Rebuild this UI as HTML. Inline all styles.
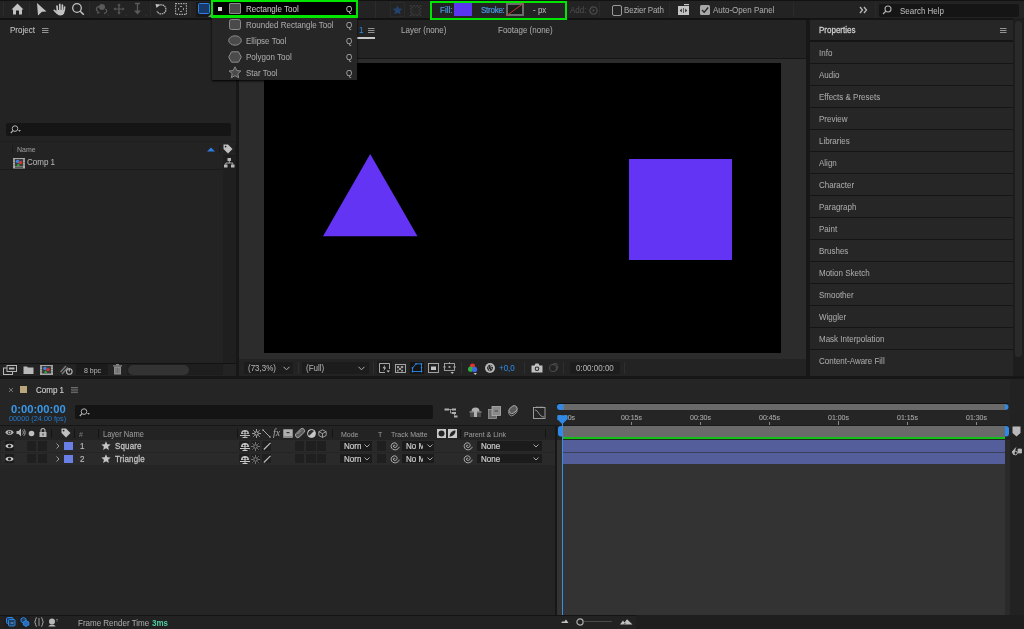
<!DOCTYPE html>
<html><head><meta charset="utf-8">
<style>
*{box-sizing:border-box;margin:0;padding:0}
html,body{width:1024px;height:629px;overflow:hidden;background:#121212;font-family:"Liberation Sans",sans-serif;color:#a8a8a8;font-size:8px}
body{position:relative}
.t{will-change:transform}
.a{position:absolute}
.t{position:absolute;white-space:nowrap;line-height:1}
svg{position:absolute;overflow:visible}
</style></head><body>
<div class="a" style="left:0px;top:1px;width:1024px;height:17px;background:#232323;"></div>
<div class="a" style="left:3px;top:2px;width:1px;height:14px;background:#2c2c2c;"></div>
<div class="a" style="left:29px;top:2px;width:1px;height:15px;background:#2a2a2a;"></div>
<div class="a" style="left:89px;top:2px;width:1px;height:15px;background:#2a2a2a;"></div>
<div class="a" style="left:150px;top:2px;width:1px;height:15px;background:#2a2a2a;"></div>
<div class="a" style="left:190px;top:2px;width:1px;height:15px;background:#2a2a2a;"></div>
<svg style="left:11px;top:3px;" width="13" height="12" viewBox="0 0 13 12"><path d="M6.5 0.5 L12.5 6.5 L11 6.5 L11 11.5 L8 11.5 L8 7.5 L5 7.5 L5 11.5 L2 11.5 L2 6.5 L0.5 6.5 Z" fill="#c2c2c2"/></svg>
<svg style="left:37px;top:3px;" width="10" height="13" viewBox="0 0 10 13"><path d="M0 0 L9.5 8.5 L5 8.8 L1 12.5 Z" fill="#c2c2c2"/></svg>
<svg style="left:53px;top:3px;" width="13" height="13" viewBox="0 0 13 13"><path d="M3.6 7 L11.4 7 L11.2 10.5 Q10 12.6 7.2 12.6 Q5 12.6 3.6 10.6 Z" fill="#c2c2c2"/><path d="M4.4 8 L4 3 M6.8 7.5 L6.8 1.4 M9.2 7.5 L9.4 2 M11.1 8 L11.6 4.2 M4.2 10.2 L1.3 7.4" stroke="#c2c2c2" stroke-width="1.7" stroke-linecap="round" fill="none"/></svg>
<svg style="left:71px;top:2px;" width="14" height="14" viewBox="0 0 14 14"><circle cx="6" cy="6" r="4.3" fill="none" stroke="#c2c2c2" stroke-width="1.3"/><path d="M9.2 9.2 L12.8 12.8" stroke="#c2c2c2" stroke-width="1.6"/></svg>
<svg style="left:95px;top:3px;" width="14" height="13" viewBox="0 0 14 13"><circle cx="7" cy="4" r="3" fill="#5a5a5a"/><path d="M4 3.5 C1 4 0.5 7 3 8.5 M9 10.5 C12 10 12.5 7.5 10.5 6" fill="none" stroke="#5a5a5a" stroke-width="1.3"/><path d="M2 8 L5 9.5 L2.5 11 Z" fill="#5a5a5a"/><path d="M12.5 12.5 L13.5 12.5 L13.5 11.5 Z" fill="#5a5a5a"/></svg>
<svg style="left:113px;top:3px;" width="14" height="13" viewBox="0 0 14 13"><path d="M6 0.5 L7.8 2.5 H6.6 V5.4 H9.5 V4.2 L11.5 6 L9.5 7.8 V6.6 H6.6 V9.5 H7.8 L6 11.5 L4.2 9.5 H5.4 V6.6 H2.5 V7.8 L0.5 6 L2.5 4.2 V5.4 H5.4 V2.5 H4.2 Z" fill="#5a5a5a"/><path d="M12.5 12.5 L13.5 12.5 L13.5 11.5 Z" fill="#5a5a5a"/></svg>
<svg style="left:133px;top:3px;" width="14" height="13" viewBox="0 0 14 13"><path d="M2 0.5 H7 M4.5 0.5 V8" stroke="#5a5a5a" stroke-width="1.3"/><path d="M1 7.5 H8 L4.5 11.5 Z" fill="#5a5a5a"/><path d="M12.5 12.5 L13.5 12.5 L13.5 11.5 Z" fill="#5a5a5a"/></svg>
<svg style="left:155px;top:3px;" width="13" height="13" viewBox="0 0 13 13"><path d="M3.2 3 A4.6 4.6 0 1 1 2 8" fill="none" stroke="#b8b8b8" stroke-width="1.2" stroke-dasharray="1.6 0.6"/><path d="M0.5 1 L5 1.5 L1.5 5 Z" fill="#c2c2c2"/></svg>
<svg style="left:175px;top:3px;" width="12" height="12" viewBox="0 0 12 12"><rect x="0.6" y="0.6" width="10.8" height="10.8" fill="none" stroke="#b0b0b0" stroke-width="1.1" stroke-dasharray="1.5 1"/><path d="M3 4.5 L4.2 6 L3 7.5 Z M9 4.5 L7.8 6 L9 7.5 Z M4.5 3 L6 4.2 L7.5 3 Z M4.5 9 L6 7.8 L7.5 9 Z" fill="#b0b0b0"/></svg>
<div class="a" style="left:196px;top:2px;width:15px;height:14.5px;background:#181818;"></div>
<div class="a" style="left:197.5px;top:3.4px;width:12.3px;height:10.6px;background:#173a6a;border:1.1px solid #2f7fe4;border-radius:1.5px"></div>
<svg style="left:208px;top:14px;" width="3" height="3" viewBox="0 0 3 3"><path d="M3 0 L3 3 L0 3 Z" fill="#888"/></svg>
<div class="a" style="left:375px;top:1px;width:1px;height:17px;background:#2c2c2c;"></div>
<div class="a" style="left:390px;top:2px;width:15px;height:15px;background:#232323;border:1px solid #2a2a2a"></div>
<svg style="left:392px;top:5px;" width="11" height="10" viewBox="0 0 11 10"><path d="M5.5 0.3 L6.9 3.6 L10.6 3.8 L7.8 6.1 L8.7 9.6 L5.5 7.7 L2.3 9.6 L3.2 6.1 L0.4 3.8 L4.1 3.6 Z" fill="#23436e"/></svg>
<svg style="left:410px;top:4.5px;" width="11.2" height="11.2" viewBox="0 0 11.2 11.2"><g fill="#3c3c3c"><rect x="0.0" y="0.0" width="1.6" height="1.6"/><rect x="0.0" y="3.2" width="1.6" height="1.6"/><rect x="0.0" y="6.4" width="1.6" height="1.6"/><rect x="0.0" y="9.6" width="1.6" height="1.6"/><rect x="1.6" y="1.6" width="1.6" height="1.6"/><rect x="1.6" y="4.8" width="1.6" height="1.6"/><rect x="1.6" y="8.0" width="1.6" height="1.6"/><rect x="3.2" y="0.0" width="1.6" height="1.6"/><rect x="3.2" y="3.2" width="1.6" height="1.6"/><rect x="3.2" y="6.4" width="1.6" height="1.6"/><rect x="3.2" y="9.6" width="1.6" height="1.6"/><rect x="4.8" y="1.6" width="1.6" height="1.6"/><rect x="4.8" y="4.8" width="1.6" height="1.6"/><rect x="4.8" y="8.0" width="1.6" height="1.6"/><rect x="6.4" y="0.0" width="1.6" height="1.6"/><rect x="6.4" y="3.2" width="1.6" height="1.6"/><rect x="6.4" y="6.4" width="1.6" height="1.6"/><rect x="6.4" y="9.6" width="1.6" height="1.6"/><rect x="8.0" y="1.6" width="1.6" height="1.6"/><rect x="8.0" y="4.8" width="1.6" height="1.6"/><rect x="8.0" y="8.0" width="1.6" height="1.6"/><rect x="9.6" y="0.0" width="1.6" height="1.6"/><rect x="9.6" y="3.2" width="1.6" height="1.6"/><rect x="9.6" y="6.4" width="1.6" height="1.6"/><rect x="9.6" y="9.6" width="1.6" height="1.6"/></g><circle cx="5.6" cy="5.6" r="3" fill="#262626"/></svg>
<div class="a" style="left:430px;top:1px;width:137px;height:19px;background:#00e600;"></div>
<div class="a" style="left:432px;top:3px;width:133px;height:15px;background:#232323;"></div>
<div class="t" style="left:440px;top:7.23px;font-size:8px;color:#4a98e4;transform:scaleY(1.12);transform-origin:0 6.77px;-webkit-text-stroke:0.2px #4a98e4;">Fill:</div>
<div class="a" style="left:454px;top:3px;width:18px;height:13px;background:#5a36f0;"></div>
<div class="t" style="left:481px;top:7.23px;font-size:8px;color:#4a98e4;transform:scaleY(1.12);transform-origin:0 6.77px;-webkit-text-stroke:0.2px #4a98e4;letter-spacing:-0.25px">Stroke:</div>
<div class="a" style="left:506px;top:3px;width:18px;height:13px;background:#6a6a6a;"></div>
<div class="a" style="left:508px;top:5px;width:14px;height:9px;background:#1a1a1a;"></div>
<svg style="left:506px;top:3px;" width="18" height="13" viewBox="0 0 18 13"><path d="M0 13 L18 0" stroke="#c0392b" stroke-width="1"/></svg>
<div class="t" style="left:533px;top:7.23px;font-size:8px;color:#b8b8b8;transform:scaleY(1.12);transform-origin:0 6.77px;-webkit-text-stroke:0.05px #b8b8b8;"><span style="color:#4a98e4">-</span> px</div>
<div class="t" style="left:570px;top:7.23px;font-size:8px;color:#4e4e4e;transform:scaleY(1.12);transform-origin:0 6.77px;-webkit-text-stroke:0.05px #4e4e4e;">Add:</div>
<svg style="left:589px;top:5.5px;" width="9" height="9" viewBox="0 0 9 9"><circle cx="4.5" cy="4.5" r="3.6" fill="none" stroke="#4a4a4a" stroke-width="1.3"/><path d="M3.6 2.8 L6 4.5 L3.6 6.2 Z" fill="#4a4a4a"/></svg>
<div class="a" style="left:599px;top:2px;width:1px;height:15px;background:#2a2a2a;"></div>
<div class="a" style="left:612px;top:5px;width:9.5px;height:10.5px;background:#232323;border:1.2px solid #9a9a9a;border-radius:2px"></div>
<div class="t" style="left:624px;top:6.73px;font-size:8px;color:#a8a8a8;transform:scaleY(1.12);transform-origin:0 6.77px;-webkit-text-stroke:0.05px #a8a8a8;letter-spacing:-0.15px">Bezier Path</div>
<div class="a" style="left:669px;top:2px;width:1px;height:15px;background:#2a2a2a;"></div>
<svg style="left:678px;top:4px;" width="12" height="12" viewBox="0 0 12 12"><rect x="0" y="2" width="11" height="9" fill="#c4c4c4"/><rect x="6" y="0" width="5" height="1.2" fill="#c4c4c4"/><path d="M3.8 4.5 L1.8 6.5 L3.8 8.5 Z M7.2 4.5 L9.2 6.5 L7.2 8.5 Z" fill="#2a2a2a"/><path d="M5.5 4 V9" stroke="#2a2a2a" stroke-width="0.7"/></svg>
<div class="a" style="left:700px;top:5px;width:10px;height:10px;background:#a8a8a8;border-radius:1.5px"></div>
<svg style="left:700px;top:5px;" width="10" height="10" viewBox="0 0 10 10"><path d="M2 5 L4.2 7.3 L8.2 2.5" fill="none" stroke="#2a2a2a" stroke-width="1.4"/></svg>
<div class="t" style="left:713px;top:6.73px;font-size:8px;color:#a8a8a8;transform:scaleY(1.12);transform-origin:0 6.77px;-webkit-text-stroke:0.05px #a8a8a8;">Auto-Open Panel</div>
<div class="a" style="left:793px;top:2px;width:1px;height:15px;background:#2a2a2a;"></div>
<svg style="left:859px;top:6px;" width="10" height="8" viewBox="0 0 10 8"><path d="M1 1 L3.5 4 L1 7 M5 1 L7.5 4 L5 7" fill="none" stroke="#b8b8b8" stroke-width="1.3"/></svg>
<div class="a" style="left:875px;top:2px;width:1px;height:15px;background:#2a2a2a;"></div>
<div class="a" style="left:879px;top:4px;width:140px;height:13px;background:#151515;border-radius:2px"></div>
<svg style="left:882px;top:5px;" width="10" height="10" viewBox="0 0 10 10"><circle cx="6" cy="4" r="3" fill="none" stroke="#b0b0b0" stroke-width="1.1"/><path d="M3.9 6.1 L1 9" stroke="#b0b0b0" stroke-width="1.3"/></svg>
<div class="t" style="left:900px;top:8.03px;font-size:8px;color:#b8b8b8;transform:scaleY(1.12);transform-origin:0 6.77px;-webkit-text-stroke:0.05px #b8b8b8;">Search Help</div>
<div class="a" style="left:0px;top:20px;width:236px;height:356px;background:#232323;"></div>
<div class="t" style="left:10px;top:27.23px;font-size:8px;color:#c4c4c4;transform:scaleY(1.12);transform-origin:0 6.77px;-webkit-text-stroke:0.05px #c4c4c4;">Project</div>
<svg style="left:42px;top:28px;" width="7" height="6" viewBox="0 0 7 6"><path d="M0 0.5 H6.5 M0 2.5 H6.5 M0 4.5 H6.5" stroke="#b0b0b0" stroke-width="0.8"/></svg>
<div class="a" style="left:6px;top:123px;width:225px;height:13px;background:#151515;border-radius:2px"></div>
<svg style="left:10px;top:125px;" width="12" height="9" viewBox="0 0 12 9"><circle cx="5" cy="3.6" r="2.8" fill="none" stroke="#b0b0b0" stroke-width="1"/><path d="M3 5.6 L0.8 8" stroke="#b0b0b0" stroke-width="1.2"/><path d="M8 5 L11 5 L9.5 6.8 Z" fill="#b0b0b0"/></svg>
<div class="a" style="left:223px;top:155.5px;width:13px;height:207.5px;background:#1f1f1f;"></div>
<div class="a" style="left:0px;top:141px;width:236px;height:1px;background:#1e1e1e;"></div>
<div class="a" style="left:0px;top:154.5px;width:236px;height:1px;background:#1b1b1b;"></div>
<div class="a" style="left:12px;top:145px;width:1px;height:8px;background:#1a1a1a;"></div>
<div class="t" style="left:17px;top:146.07px;font-size:7px;color:#9a9a9a;transform:scaleY(1.12);transform-origin:0 5.93px;-webkit-text-stroke:0.05px #9a9a9a;">Name</div>
<svg style="left:207px;top:147px;" width="8" height="5" viewBox="0 0 8 5"><path d="M0 4.5 L4 0.5 L8 4.5 Z" fill="#2e7de0"/></svg>
<div class="a" style="left:219px;top:145px;width:1px;height:8px;background:#1a1a1a;"></div>
<div class="a" style="left:234.5px;top:145px;width:1px;height:8px;background:#1a1a1a;"></div>
<svg style="left:223px;top:144px;" width="10" height="10" viewBox="0 0 10 10"><path d="M0.5 0.5 H5 L9.5 5 L5 9.5 L0.5 5 Z" fill="#c0c0c0"/><circle cx="2.6" cy="2.6" r="0.9" fill="#232323"/></svg>
<div class="a" style="left:0px;top:155px;width:223px;height:14px;background:#232323;"></div>
<div class="a" style="left:0px;top:169px;width:223px;height:1px;background:#1b1b1b;"></div>
<svg style="left:13px;top:158px;" width="12" height="10.5" viewBox="0 0 12 10.5"><rect x="0" y="0" width="12" height="10.5" fill="#a8a8a8"/><rect x="2" y="1" width="8" height="7.5" fill="#3c3c3c"/><path d="M0.5 1.5h1v1h-1zM0.5 4h1v1h-1zM0.5 6.5h1v1h-1zM10.5 1.5h1v1h-1zM10.5 4h1v1h-1zM10.5 6.5h1v1h-1z" fill="#555"/><path d="M2 9.5 H10" stroke="#333" stroke-width="0.7"/><circle cx="4.6" cy="3.4" r="1.7" fill="#3a86e8"/><circle cx="7.6" cy="4.6" r="1.7" fill="#e03030"/><path d="M3.6 8 L5.3 5.3 L7 8 Z" fill="#22b030"/></svg>
<div class="t" style="left:27px;top:159.23px;font-size:8px;color:#b4b4b4;transform:scaleY(1.12);transform-origin:0 6.77px;-webkit-text-stroke:0.05px #b4b4b4;">Comp 1</div>
<svg style="left:224px;top:158px;" width="11" height="10" viewBox="0 0 11 10"><rect x="3.5" y="0" width="3.5" height="3" fill="#b8b8b8"/><path d="M5.25 3 V5 M1.8 5 H8.7 M1.8 5 V6.5 M8.7 5 V6.5" stroke="#b8b8b8" stroke-width="0.9"/><rect x="0" y="6.5" width="3.5" height="3" fill="#b8b8b8"/><rect x="7" y="6.5" width="3.5" height="3" fill="#b8b8b8"/></svg>
<div class="a" style="left:0px;top:363px;width:236px;height:1px;background:#121212;"></div>
<div class="a" style="left:0px;top:364px;width:236px;height:11px;background:#232323;"></div>
<svg style="left:3px;top:365px;" width="14" height="10" viewBox="0 0 14 10"><rect x="0.5" y="3" width="9" height="6.5" fill="none" stroke="#b8b8b8"/><rect x="4" y="0.5" width="9.5" height="6" fill="#232323" stroke="#b8b8b8"/><rect x="6" y="2.5" width="5.5" height="2" fill="#b8b8b8"/></svg>
<svg style="left:23px;top:365px;" width="11" height="10" viewBox="0 0 11 10"><path d="M0.5 1.5 H4 L5 2.5 H10.5 V9 H0.5 Z" fill="#b8b8b8"/></svg>
<svg style="left:40px;top:365px;" width="13" height="10" viewBox="0 0 13 10"><rect x="0" y="0" width="13" height="10" fill="#a8a8a8"/><rect x="2" y="1" width="9" height="7.5" fill="#3c3c3c"/><path d="M0.5 1.5h1v1h-1zM0.5 4h1v1h-1zM0.5 6.5h1v1h-1zM11.5 1.5h1v1h-1zM11.5 4h1v1h-1zM11.5 6.5h1v1h-1z" fill="#555"/><circle cx="5" cy="3.4" r="1.7" fill="#3a86e8"/><circle cx="8" cy="4.6" r="1.7" fill="#e03030"/><path d="M4 8 L5.7 5.3 L7.4 8 Z" fill="#22b030"/></svg>
<svg style="left:60px;top:365px;" width="13" height="10" viewBox="0 0 13 10"><path d="M0.5 7 L6 1 M2 9 L8 2.5" stroke="#777" stroke-width="1.5"/><circle cx="9.3" cy="6.5" r="2.8" fill="none" stroke="#b8b8b8" stroke-width="1.1"/><path d="M9.3 3 V6.5" stroke="#b8b8b8" stroke-width="1.1"/></svg>
<div class="a" style="left:76px;top:364px;width:32px;height:11px;background:#1b1b1b;border-radius:1px"></div>
<div class="t" style="left:83.5px;top:366.57px;font-size:7px;color:#b0b0b0;transform:scaleY(1.12);transform-origin:0 5.93px;-webkit-text-stroke:0.05px #b0b0b0;">8 bpc</div>
<svg style="left:113px;top:364px;" width="9" height="11" viewBox="0 0 9 11"><rect x="1" y="2.5" width="7" height="8" fill="#8a8a8a"/><rect x="0" y="1.3" width="9" height="1.2" fill="#8a8a8a"/><rect x="3" y="0" width="3" height="1.3" fill="#8a8a8a"/><path d="M3 4 V9 M4.5 4 V9 M6 4 V9" stroke="#555" stroke-width="0.6"/></svg>
<div class="a" style="left:127px;top:364px;width:96px;height:11px;background:#1e1e1e;"></div>
<div class="a" style="left:128px;top:365px;width:61px;height:10px;background:#333333;border-radius:5px"></div>
<div class="a" style="left:236px;top:20px;width:3px;height:356px;background:#171717;"></div>
<div class="a" style="left:239px;top:20px;width:567px;height:356px;background:#232323;"></div>
<div class="t" style="left:359px;top:27.23px;font-size:8px;color:#2e8ae6;transform:scaleY(1.12);transform-origin:0 6.77px;-webkit-text-stroke:0.05px #2e8ae6;">1</div>
<svg style="left:368px;top:28px;" width="7" height="6" viewBox="0 0 7 6"><path d="M0 0.5 H6.5 M0 2.5 H6.5 M0 4.5 H6.5" stroke="#b0b0b0" stroke-width="0.8"/></svg>
<div class="a" style="left:357px;top:37px;width:18px;height:1.5px;background:#c8c8c8;"></div>
<div class="t" style="left:401px;top:27.23px;font-size:8px;color:#a8a8a8;transform:scaleY(1.12);transform-origin:0 6.77px;-webkit-text-stroke:0.05px #a8a8a8;">Layer (none)</div>
<div class="t" style="left:498px;top:27.23px;font-size:8px;color:#a8a8a8;transform:scaleY(1.12);transform-origin:0 6.77px;-webkit-text-stroke:0.05px #a8a8a8;">Footage (none)</div>
<div class="a" style="left:239px;top:58px;width:567px;height:1px;background:#151515;"></div>
<div class="a" style="left:239px;top:59px;width:567px;height:300px;background:#2c2c2c;"></div>
<div class="a" style="left:264px;top:63px;width:517px;height:290px;background:#000;"></div>
<svg style="left:322.6px;top:154.2px;" width="95" height="83" viewBox="0 0 95 83"><path d="M47.2 0 L94.5 82.2 L0 82.2 Z" fill="#6434f4"/></svg>
<div class="a" style="left:629.2px;top:158.6px;width:103px;height:101.7px;background:#6434f4;"></div>
<div class="a" style="left:239px;top:359px;width:567px;height:17px;background:#232323;"></div>
<div class="a" style="left:244px;top:362px;width:49px;height:12px;background:#1c1c1c;"></div>
<div class="t" style="left:248px;top:364.73px;font-size:8px;color:#b0b0b0;transform:scaleY(1.12);transform-origin:0 6.77px;-webkit-text-stroke:0.05px #b0b0b0;">(73,3%)</div>
<svg style="left:283px;top:366px;" width="7" height="5" viewBox="0 0 7 5"><path d="M0.5 0.8 L3.5 3.8 L6.5 0.8" fill="none" stroke="#b0b0b0" stroke-width="1"/></svg>
<div class="a" style="left:298px;top:362px;width:1px;height:12px;background:#2e2e2e;"></div>
<div class="a" style="left:302px;top:362px;width:67px;height:12px;background:#1c1c1c;"></div>
<div class="t" style="left:306px;top:364.73px;font-size:8px;color:#b0b0b0;transform:scaleY(1.12);transform-origin:0 6.77px;-webkit-text-stroke:0.05px #b0b0b0;">(Full)</div>
<svg style="left:358px;top:366px;" width="7" height="5" viewBox="0 0 7 5"><path d="M0.5 0.8 L3.5 3.8 L6.5 0.8" fill="none" stroke="#b0b0b0" stroke-width="1"/></svg>
<div class="a" style="left:373px;top:362px;width:1px;height:12px;background:#2e2e2e;"></div>
<div class="a" style="left:377px;top:361px;width:15px;height:13px;background:#1c1c1c;"></div>
<svg style="left:379px;top:363px;" width="12" height="10" viewBox="0 0 12 10"><path d="M10.5 6 V0.5 H0.5 V9.5 H6" fill="none" stroke="#b8b8b8" stroke-width="0.9"/><path d="M6.2 1.8 L3.6 5.2 H5.4 L4.4 8.2 L7.2 4.6 H5.4 Z" fill="#c8c8c8"/><path d="M7.5 7.5 H11 L9.25 9.5 Z" fill="#c8c8c8"/></svg>
<svg style="left:395px;top:364px;" width="11" height="9" viewBox="0 0 11 9"><rect x="0.5" y="0.5" width="10" height="8" fill="none" stroke="#b0b0b0" stroke-width="0.9"/><path d="M2 2h2v2h-2zM6 2h2v2h-2zM4 4h2v2h-2zM2 6h1.5v1.5h-1.5zM6 6h2v1.5h-2z" fill="#9a9a9a"/><path d="M4 2h2v2h-2zM8 2h1.5v2h-1.5zM2 4h2v2h-2zM6 4h2v2h-2z" fill="#3a3a3a"/></svg>
<div class="a" style="left:410px;top:362px;width:14px;height:12px;background:#141414;"></div>
<svg style="left:411px;top:363px;" width="12" height="10" viewBox="0 0 12 10"><path d="M1.5 5 L5 0.8 H10.5 V8.5 H1.5 Z" fill="none" stroke="#2e86e0" stroke-width="0.9"/><circle cx="1.5" cy="5" r="0.9" fill="#2e86e0"/><circle cx="5" cy="0.8" r="0.9" fill="#2e86e0"/><circle cx="10.5" cy="0.8" r="0.9" fill="#2e86e0"/><circle cx="10.5" cy="8.5" r="0.9" fill="#2e86e0"/><circle cx="1.5" cy="8.5" r="0.9" fill="#2e86e0"/><circle cx="10.5" cy="4.6" r="0.8" fill="#2e86e0"/></svg>
<svg style="left:428px;top:363px;" width="11" height="10" viewBox="0 0 11 10"><rect x="0.5" y="0.5" width="10" height="9" fill="none" stroke="#b0b0b0" stroke-width="0.9"/><rect x="3" y="3.5" width="5" height="3.5" fill="#c4c4c4"/></svg>
<svg style="left:443px;top:362px;" width="13" height="12" viewBox="0 0 13 12"><rect x="1.5" y="1.5" width="10" height="7" fill="none" stroke="#a8a8a8" stroke-width="0.9"/><path d="M6.5 0 V2 M6.5 4 V6 M0 5 H3 M10 5 H13 M5 5 H8" stroke="#a8a8a8" stroke-width="0.8"/><path d="M7.5 10 H11 L9.25 12 Z" fill="#c0c0c0"/></svg>
<div class="a" style="left:461px;top:362px;width:1px;height:12px;background:#2e2e2e;"></div>
<svg style="left:467px;top:363px;" width="12" height="12" viewBox="0 0 12 12"><circle cx="5.5" cy="3" r="2.6" fill="#e03030"/><circle cx="3.6" cy="6.2" r="2.6" fill="#30b040"/><circle cx="7.6" cy="6.4" r="2.6" fill="#3a6ae0"/><path d="M6.5 10 L10 10 L8.25 12 Z" fill="#c0c0c0"/></svg>
<svg style="left:484px;top:362px;" width="12" height="12" viewBox="0 0 12 12"><circle cx="6" cy="6" r="5" fill="#b8b8b8"/><path d="M6 2.5 L9 4.3 L9 7.7 L6 9.5 L3 7.7 L3 4.3 Z" fill="#2a2a2a"/><path d="M6 2.5 L7.5 5 M9 4.3 L6.5 5.2 M9 7.7 L7.2 6.2 M6 9.5 L5.4 7 M3 7.7 L4.6 6.6 M3 4.3 L5 5.4" stroke="#b8b8b8" stroke-width="0.8"/></svg>
<div class="t" style="left:499px;top:364.73px;font-size:8px;color:#2e8ae6;transform:scaleY(1.12);transform-origin:0 6.77px;-webkit-text-stroke:0.05px #2e8ae6;">+0,0</div>
<div class="a" style="left:524px;top:362px;width:1px;height:12px;background:#2e2e2e;"></div>
<svg style="left:531px;top:363px;" width="12" height="10" viewBox="0 0 12 10"><path d="M0.5 2.5 H3.5 L4.5 0.5 H7.5 L8.5 2.5 H11.5 V9.5 H0.5 Z" fill="#c0c0c0"/><circle cx="6" cy="5.8" r="2.3" fill="#232323"/><circle cx="6" cy="5.8" r="1.3" fill="#c0c0c0"/></svg>
<svg style="left:548px;top:362px;" width="11" height="11" viewBox="0 0 11 11"><circle cx="5" cy="6" r="3.5" fill="none" stroke="#4a4a4a" stroke-width="1.1"/><path d="M4 3 Q6.5 0.5 9.5 2.5 M7.5 8.5 Q10.5 6.5 9.5 3.5" fill="none" stroke="#4a4a4a" stroke-width="1.1"/></svg>
<div class="a" style="left:563px;top:362px;width:1px;height:12px;background:#2e2e2e;"></div>
<div class="a" style="left:570px;top:362px;width:50px;height:12px;background:#1c1c1c;"></div>
<div class="t" style="left:576px;top:364.73px;font-size:8px;color:#b0b0b0;transform:scaleY(1.12);transform-origin:0 6.77px;-webkit-text-stroke:0.05px #b0b0b0;">0:00:00:00</div>
<div class="a" style="left:624px;top:362px;width:1px;height:12px;background:#2e2e2e;"></div>
<div class="a" style="left:806px;top:20px;width:4px;height:356px;background:#171717;"></div>
<div class="a" style="left:810px;top:18px;width:214px;height:358px;background:#151515;"></div>
<div class="a" style="left:810px;top:20px;width:203px;height:20px;background:#262626;"></div>
<div class="t" style="left:818.5px;top:27.23px;font-size:8px;color:#d0d0d0;transform:scaleY(1.12);transform-origin:0 6.77px;-webkit-text-stroke:0.25px #d0d0d0;">Properties</div>
<svg style="left:1000px;top:28px;" width="7" height="6" viewBox="0 0 7 6"><path d="M0 0.5 H6.5 M0 2.5 H6.5 M0 4.5 H6.5" stroke="#b0b0b0" stroke-width="0.8"/></svg>
<div class="a" style="left:810px;top:41.5px;width:203px;height:21px;background:#262626;"></div>
<div class="t" style="left:818.8px;top:49.93px;font-size:8px;color:#a8a8a8;transform:scaleY(1.12);transform-origin:0 6.77px;-webkit-text-stroke:0.05px #a8a8a8;">Info</div>
<div class="a" style="left:810px;top:63.5px;width:203px;height:21px;background:#262626;"></div>
<div class="t" style="left:818.8px;top:71.93px;font-size:8px;color:#a8a8a8;transform:scaleY(1.12);transform-origin:0 6.77px;-webkit-text-stroke:0.05px #a8a8a8;">Audio</div>
<div class="a" style="left:810px;top:85.5px;width:203px;height:21px;background:#262626;"></div>
<div class="t" style="left:818.8px;top:93.93px;font-size:8px;color:#a8a8a8;transform:scaleY(1.12);transform-origin:0 6.77px;-webkit-text-stroke:0.05px #a8a8a8;">Effects &amp; Presets</div>
<div class="a" style="left:810px;top:107.5px;width:203px;height:21px;background:#262626;"></div>
<div class="t" style="left:818.8px;top:115.93px;font-size:8px;color:#a8a8a8;transform:scaleY(1.12);transform-origin:0 6.77px;-webkit-text-stroke:0.05px #a8a8a8;">Preview</div>
<div class="a" style="left:810px;top:129.5px;width:203px;height:21px;background:#262626;"></div>
<div class="t" style="left:818.8px;top:137.93px;font-size:8px;color:#a8a8a8;transform:scaleY(1.12);transform-origin:0 6.77px;-webkit-text-stroke:0.05px #a8a8a8;">Libraries</div>
<div class="a" style="left:810px;top:151.5px;width:203px;height:21px;background:#262626;"></div>
<div class="t" style="left:818.8px;top:159.93px;font-size:8px;color:#a8a8a8;transform:scaleY(1.12);transform-origin:0 6.77px;-webkit-text-stroke:0.05px #a8a8a8;">Align</div>
<div class="a" style="left:810px;top:173.5px;width:203px;height:21px;background:#262626;"></div>
<div class="t" style="left:818.8px;top:181.93px;font-size:8px;color:#a8a8a8;transform:scaleY(1.12);transform-origin:0 6.77px;-webkit-text-stroke:0.05px #a8a8a8;">Character</div>
<div class="a" style="left:810px;top:195.5px;width:203px;height:21px;background:#262626;"></div>
<div class="t" style="left:818.8px;top:203.93px;font-size:8px;color:#a8a8a8;transform:scaleY(1.12);transform-origin:0 6.77px;-webkit-text-stroke:0.05px #a8a8a8;">Paragraph</div>
<div class="a" style="left:810px;top:217.5px;width:203px;height:21px;background:#262626;"></div>
<div class="t" style="left:818.8px;top:225.93px;font-size:8px;color:#a8a8a8;transform:scaleY(1.12);transform-origin:0 6.77px;-webkit-text-stroke:0.05px #a8a8a8;">Paint</div>
<div class="a" style="left:810px;top:239.5px;width:203px;height:21px;background:#262626;"></div>
<div class="t" style="left:818.8px;top:247.93px;font-size:8px;color:#a8a8a8;transform:scaleY(1.12);transform-origin:0 6.77px;-webkit-text-stroke:0.05px #a8a8a8;">Brushes</div>
<div class="a" style="left:810px;top:261.5px;width:203px;height:21px;background:#262626;"></div>
<div class="t" style="left:818.8px;top:269.93px;font-size:8px;color:#a8a8a8;transform:scaleY(1.12);transform-origin:0 6.77px;-webkit-text-stroke:0.05px #a8a8a8;">Motion Sketch</div>
<div class="a" style="left:810px;top:283.5px;width:203px;height:21px;background:#262626;"></div>
<div class="t" style="left:818.8px;top:291.93px;font-size:8px;color:#a8a8a8;transform:scaleY(1.12);transform-origin:0 6.77px;-webkit-text-stroke:0.05px #a8a8a8;">Smoother</div>
<div class="a" style="left:810px;top:305.5px;width:203px;height:21px;background:#262626;"></div>
<div class="t" style="left:818.8px;top:313.93px;font-size:8px;color:#a8a8a8;transform:scaleY(1.12);transform-origin:0 6.77px;-webkit-text-stroke:0.05px #a8a8a8;">Wiggler</div>
<div class="a" style="left:810px;top:327.5px;width:203px;height:21px;background:#262626;"></div>
<div class="t" style="left:818.8px;top:335.93px;font-size:8px;color:#a8a8a8;transform:scaleY(1.12);transform-origin:0 6.77px;-webkit-text-stroke:0.05px #a8a8a8;">Mask Interpolation</div>
<div class="a" style="left:810px;top:349.5px;width:203px;height:21px;background:#262626;"></div>
<div class="t" style="left:818.8px;top:357.93px;font-size:8px;color:#a8a8a8;transform:scaleY(1.12);transform-origin:0 6.77px;-webkit-text-stroke:0.05px #a8a8a8;">Content-Aware Fill</div>
<div class="a" style="left:810px;top:371px;width:203px;height:5px;background:#262626;"></div>
<div class="a" style="left:1013px;top:18px;width:11px;height:358px;background:#1d1d1d;"></div>
<div class="a" style="left:1015px;top:21px;width:7px;height:336px;background:#2a2a2a;border-radius:3.5px"></div>
<div class="a" style="left:0px;top:376px;width:1024px;height:3px;background:#161616;"></div>
<div class="a" style="left:0px;top:379px;width:1024px;height:236px;background:#252525;"></div>
<svg style="left:8.5px;top:388px;" width="4" height="4" viewBox="0 0 4 4"><path d="M0 0 L4 4 M4 0 L0 4" stroke="#8a8a8a" stroke-width="0.8"/></svg>
<div class="a" style="left:20px;top:386px;width:7px;height:7px;background:#bba57c;"></div>
<div class="t" style="left:35.5px;top:386.73px;font-size:8px;color:#c8c8c8;transform:scaleY(1.12);transform-origin:0 6.77px;-webkit-text-stroke:0.15px #c8c8c8;">Comp 1</div>
<svg style="left:70.5px;top:387px;" width="7" height="6" viewBox="0 0 7 6"><path d="M0 0.5 H7 M0 2.2 H7 M0 3.9 H7 M0 5.6 H7" stroke="#9a9a9a" stroke-width="0.6"/></svg>
<div class="t" style="left:10.5px;top:403.72px;font-size:11.2px;color:#3a98e8;font-weight:bold">0:00:00:00</div>
<div class="t" style="left:9px;top:415.32px;font-size:7.3px;color:#2676c4;-webkit-text-stroke:0.05px #2676c4;">00000 (24.00 fps)</div>
<div class="a" style="left:75px;top:405px;width:358px;height:14px;background:#141414;border-radius:2px"></div>
<svg style="left:79px;top:408px;" width="12" height="9" viewBox="0 0 12 9"><circle cx="5" cy="3.6" r="2.8" fill="none" stroke="#b0b0b0" stroke-width="1"/><path d="M3 5.6 L0.8 8" stroke="#b0b0b0" stroke-width="1.2"/><path d="M8 5 L11 5 L9.5 6.8 Z" fill="#b0b0b0"/></svg>
<svg style="left:444px;top:407px;" width="14" height="12" viewBox="0 0 14 12"><rect x="0.5" y="1.5" width="4.5" height="2" fill="#b0b0b0"/><rect x="8" y="1.5" width="4" height="2" fill="#b0b0b0"/><rect x="8" y="5" width="4" height="2" fill="#b0b0b0"/><rect x="10" y="8.5" width="3.5" height="2" fill="#b0b0b0"/><path d="M5 2.5 H8 M6.5 2.5 V6 H8 M10.5 7 V8.5" stroke="#b0b0b0" stroke-width="0.8" fill="none"/></svg>
<svg style="left:469px;top:406px;" width="13" height="12" viewBox="0 0 13 12"><path d="M2.5 5.5 A4 4 0 0 1 10.5 5.5 Z" fill="#b0b0b0"/><path d="M0.5 6 H12.5" stroke="#b0b0b0" stroke-width="1"/><rect x="1" y="7" width="11" height="4" fill="#4a4a4a"/><rect x="5" y="5" width="3" height="6" fill="#b0b0b0"/></svg>
<svg style="left:488px;top:406px;" width="13" height="13" viewBox="0 0 13 13"><rect x="0.5" y="3.5" width="8" height="9" fill="#6a6a6a" stroke="#9a9a9a" stroke-width="0.8"/><rect x="4" y="0.5" width="8.5" height="9" fill="#8a8a8a" stroke="#b0b0b0" stroke-width="0.8"/><path d="M6.5 5 H10" stroke="#444" stroke-width="1"/></svg>
<svg style="left:507px;top:406px;" width="13" height="13" viewBox="0 0 13 13"><rect x="2" y="2.5" width="9" height="6" rx="3" transform="rotate(-40 6.5 6.5)" fill="none" stroke="#9a9a9a" stroke-width="0.9"/><rect x="3.5" y="1" width="9" height="6" rx="3" transform="rotate(-40 6.5 6.5)" fill="#5a5a5a" stroke="#b0b0b0" stroke-width="0.9"/></svg>
<svg style="left:533px;top:406px;" width="13" height="13" viewBox="0 0 13 13"><rect x="0.5" y="1.5" width="11.5" height="11" fill="none" stroke="#a8a8a8" stroke-width="0.9"/><path d="M2 4 C5.5 4 6 11 11 11" fill="none" stroke="#a8a8a8" stroke-width="0.9"/><path d="M4 0 V2 M6 0.5 V2 M8 0 V2 M10 0.5 V2" stroke="#a8a8a8" stroke-width="0.6"/></svg>
<div class="a" style="left:0px;top:425px;width:556px;height:1px;background:#161616;"></div>
<div class="a" style="left:0px;top:426px;width:556px;height:14px;background:#232323;"></div>
<div class="a" style="left:0px;top:440px;width:556px;height:1px;background:#1b1b1b;"></div>
<svg style="left:5px;top:429px;" width="9" height="7" viewBox="0 0 9 7"><path d="M0.3 3.5 C2 0.3 7 0.3 8.7 3.5 C7 6.7 2 6.7 0.3 3.5 Z" fill="#b8b8b8"/><circle cx="4.5" cy="3.5" r="1.8" fill="#232323"/><circle cx="4.5" cy="3.5" r="1" fill="#b8b8b8"/></svg>
<svg style="left:16px;top:428px;" width="10" height="9" viewBox="0 0 10 9"><path d="M0.5 3 H2.5 L5 0.5 V8.5 L2.5 6 H0.5 Z" fill="#b8b8b8"/><path d="M6.5 2.5 C7.7 3.7 7.7 5.3 6.5 6.5 M7.8 1.2 C9.6 3 9.6 6 7.8 7.8" fill="none" stroke="#b8b8b8" stroke-width="0.9"/></svg>
<svg style="left:28px;top:430px;" width="7" height="7" viewBox="0 0 7 7"><circle cx="3.5" cy="3.5" r="2.8" fill="#c0c0c0"/></svg>
<svg style="left:39px;top:428px;" width="8" height="9" viewBox="0 0 8 9"><path d="M2 4 V2.5 a2 2 0 0 1 4 0 V4" fill="none" stroke="#b8b8b8" stroke-width="1.1"/><rect x="0.5" y="4" width="7" height="5" fill="#b8b8b8"/><rect x="3.5" y="5.5" width="1" height="2" fill="#232323"/></svg>
<div class="a" style="left:51px;top:429px;width:1px;height:9px;background:#141414;"></div>
<svg style="left:61px;top:428px;" width="10" height="10" viewBox="0 0 10 10"><path d="M0.5 0.5 H5 L9.5 5 L5 9.5 L0.5 5 Z" fill="#c0c0c0"/><circle cx="2.6" cy="2.6" r="0.9" fill="#232323"/></svg>
<div class="a" style="left:74px;top:429px;width:1px;height:9px;background:#141414;"></div>
<div class="t" style="left:79px;top:431.07px;font-size:7px;color:#777777;transform:scaleY(1.12);transform-origin:0 5.93px;-webkit-text-stroke:0.05px #777777;">#</div>
<div class="a" style="left:98px;top:429px;width:1px;height:9px;background:#141414;"></div>
<div class="t" style="left:103px;top:431.15px;font-size:7.5px;color:#9a9a9a;transform:scaleY(1.12);transform-origin:0 6.35px;-webkit-text-stroke:0.05px #9a9a9a;">Layer Name</div>
<div class="a" style="left:237px;top:429px;width:1px;height:9px;background:#141414;"></div>
<svg style="left:240px;top:429px;" width="10" height="9" viewBox="0 0 10 9"><path d="M1 5 A4 4 0 0 1 9 5 Z" fill="#b8b8b8"/><circle cx="3.6" cy="3.6" r="0.9" fill="#232323"/><circle cx="6.4" cy="3.6" r="0.9" fill="#232323"/><path d="M0 6.5 H10 M5 5 V8.5 M2.5 8.5 H7.5" stroke="#b8b8b8" stroke-width="1"/></svg>
<svg style="left:251.5px;top:428.5px;" width="9" height="9" viewBox="0 0 9 9"><circle cx="4.5" cy="4.5" r="1.8" fill="none" stroke="#c0c0c0"/><path d="M4.5 0 V2 M4.5 7 V9 M0 4.5 H2 M7 4.5 H9 M1.3 1.3 L2.7 2.7 M6.3 6.3 L7.7 7.7 M1.3 7.7 L2.7 6.3 M6.3 2.7 L7.7 1.3" stroke="#c0c0c0" stroke-width="0.8"/></svg>
<svg style="left:262px;top:428.5px;" width="9" height="9" viewBox="0 0 9 9"><path d="M1 1 L8 8" stroke="#b8b8b8" stroke-width="0.9"/><circle cx="1" cy="1" r="0.8" fill="#b8b8b8"/><circle cx="8" cy="8" r="0.8" fill="#b8b8b8"/></svg>
<div class="t" style="left:272.5px;top:428.03px;font-size:10px;color:#a8a8a8;font-family:'Liberation Serif'"><i>fx</i></div>
<svg style="left:283px;top:428.5px;" width="10" height="9" viewBox="0 0 10 9"><rect x="0" y="0" width="10" height="9" fill="#8a8a8a" rx="1"/><rect x="1" y="1" width="8" height="6" fill="#b0b0b0"/><rect x="3.5" y="3" width="3" height="1.2" fill="#333"/></svg>
<svg style="left:295px;top:428px;" width="10" height="10" viewBox="0 0 10 10"><rect x="-0.5" y="2.6" width="11" height="4.8" rx="2.4" transform="rotate(-45 5 5)" fill="#5a5a5a" stroke="#b8b8b8" stroke-width="0.8"/><path d="M2.5 6 L6 2.5" stroke="#b8b8b8" stroke-width="0.7"/></svg>
<svg style="left:306.5px;top:428.5px;" width="9" height="9" viewBox="0 0 9 9"><circle cx="4.5" cy="4.5" r="4" fill="#c8c8c8"/><path d="M1.7 7.3 A4 4 0 0 1 7.3 1.7 Z" fill="#2e2e2e"/><circle cx="4.5" cy="4.5" r="4" fill="none" stroke="#c8c8c8" stroke-width="0.8"/></svg>
<svg style="left:318px;top:429px;" width="9" height="9" viewBox="0 0 9 9"><path d="M4.5 0.8 L8.2 2.7 V6.5 L4.5 8.4 L0.8 6.5 V2.7 Z M0.8 2.7 L4.5 4.6 L8.2 2.7 M4.5 4.6 V8.4" fill="none" stroke="#b8b8b8" stroke-width="0.8"/></svg>
<div class="a" style="left:332px;top:429px;width:1px;height:9px;background:#141414;"></div>
<div class="t" style="left:341px;top:431.07px;font-size:7px;color:#9a9a9a;transform:scaleY(1.12);transform-origin:0 5.93px;-webkit-text-stroke:0.05px #9a9a9a;">Mode</div>
<div class="t" style="left:378px;top:431.07px;font-size:7px;color:#9a9a9a;transform:scaleY(1.12);transform-origin:0 5.93px;-webkit-text-stroke:0.05px #9a9a9a;">T</div>
<div class="t" style="left:391px;top:431.07px;font-size:7px;color:#9a9a9a;transform:scaleY(1.12);transform-origin:0 5.93px;-webkit-text-stroke:0.05px #9a9a9a;">Track Matte</div>
<svg style="left:437px;top:429px;" width="9" height="9" viewBox="0 0 9 9"><rect x="0" y="0" width="9" height="9" fill="#c8c8c8"/><circle cx="4.5" cy="4.5" r="3" fill="#232323"/></svg>
<svg style="left:448px;top:429px;" width="9" height="9" viewBox="0 0 9 9"><rect x="0" y="0" width="9" height="9" fill="#c8c8c8"/><path d="M1.5 7.5 C2 3 5 1.5 7.5 1.5 C7.5 5 5 7.5 1.5 7.5 Z" fill="#232323"/></svg>
<div class="a" style="left:460px;top:429px;width:1px;height:9px;background:#141414;"></div>
<div class="t" style="left:464px;top:431.07px;font-size:7px;color:#9a9a9a;transform:scaleY(1.12);transform-origin:0 5.93px;-webkit-text-stroke:0.05px #9a9a9a;">Parent &amp; Link</div>
<div class="a" style="left:545px;top:429px;width:1px;height:9px;background:#141414;"></div>
<div class="a" style="left:1px;top:440.3px;width:555px;height:11.5px;background:#2a2a2a;"></div>
<div class="a" style="left:4.5px;top:441.1px;width:9.5px;height:9.6px;background:#1c1c1c;"></div>
<svg style="left:4.8px;top:442.8px;" width="9" height="7" viewBox="0 0 9 7"><path d="M0.3 3 C2 0 7 0 8.7 3 C7 6 2 6 0.3 3 Z" fill="#c4c4c4"/><circle cx="4.5" cy="3" r="1.6" fill="#1c1c1c"/></svg>
<div class="a" style="left:26.7px;top:441.1px;width:9.3px;height:9.6px;background:#1f1f1f;"></div>
<div class="a" style="left:37.8px;top:441.1px;width:9.2px;height:9.6px;background:#1f1f1f;"></div>
<svg style="left:55.5px;top:443.3px;" width="4" height="6" viewBox="0 0 4 6"><path d="M0.5 0.5 L3 3 L0.5 5.5" fill="none" stroke="#a8a8a8" stroke-width="0.9"/></svg>
<div class="a" style="left:64px;top:441.8px;width:9px;height:8.5px;background:#6b80e6;"></div>
<div class="t" style="left:80px;top:442.83px;font-size:8px;color:#b8b8b8;transform:scaleY(1.12);transform-origin:0 6.77px;-webkit-text-stroke:0.2px #b8b8b8;">1</div>
<svg style="left:101px;top:441.3px;" width="10" height="9" viewBox="0 0 10 9"><path d="M5 0.2 L6.3 3.3 L9.7 3.5 L7.1 5.7 L7.9 9 L5 7.2 L2.1 9 L2.9 5.7 L0.3 3.5 L3.7 3.3 Z" fill="#c4c4c4"/></svg>
<div class="t" style="left:114.8px;top:442.83px;font-size:8px;color:#c4c4c4;transform:scaleY(1.12);transform-origin:0 6.77px;-webkit-text-stroke:0.25px #c4c4c4;letter-spacing:0.15px">Square</div>
<div class="a" style="left:239.4px;top:441.1px;width:9.9px;height:9.6px;background:#1f1f1f;"></div>
<svg style="left:240px;top:441.8px;" width="10" height="9" viewBox="0 0 10 9"><path d="M1 5 A4 4 0 0 1 9 5 Z" fill="#c8c8c8"/><circle cx="3.6" cy="3.6" r="0.9" fill="#232323"/><circle cx="6.4" cy="3.6" r="0.9" fill="#232323"/><path d="M0 6.5 H10 M5 5 V8.5 M2.5 8.5 H7.5" stroke="#c8c8c8" stroke-width="1"/></svg>
<div class="a" style="left:250.9px;top:441.1px;width:9px;height:9.6px;background:#1f1f1f;"></div>
<svg style="left:251.4px;top:441.8px;" width="9" height="9" viewBox="0 0 9 9"><circle cx="4.5" cy="4.5" r="1.8" fill="none" stroke="#8a8a8a"/><path d="M4.5 0 V2 M4.5 7 V9 M0 4.5 H2 M7 4.5 H9 M1.3 1.3 L2.7 2.7 M6.3 6.3 L7.7 7.7 M1.3 7.7 L2.7 6.3 M6.3 2.7 L7.7 1.3" stroke="#8a8a8a" stroke-width="0.8"/></svg>
<div class="a" style="left:261.7px;top:441.1px;width:9.3px;height:9.6px;background:#1f1f1f;"></div>
<svg style="left:262.5px;top:441.8px;" width="8" height="8" viewBox="0 0 8 8"><path d="M0.8 7.5 L7.5 0.8" stroke="#c4c4c4" stroke-width="1.1"/></svg>
<div class="a" style="left:295px;top:441.1px;width:9.4px;height:9.6px;background:#1f1f1f;"></div>
<div class="a" style="left:306.2px;top:441.1px;width:9.4px;height:9.6px;background:#1f1f1f;"></div>
<div class="a" style="left:317px;top:441.1px;width:9.4px;height:9.6px;background:#1f1f1f;"></div>
<div class="a" style="left:340px;top:441.1px;width:32.2px;height:9.6px;background:#1b1b1b;"></div>
<div class="t" style="left:344px;top:442.83px;font-size:8px;color:#cccccc;transform:scaleY(1.12);transform-origin:0 6.77px;-webkit-text-stroke:0.2px #cccccc;">Norn</div>
<svg style="left:364px;top:444.3px;" width="6" height="4" viewBox="0 0 6 4"><path d="M0.5 0.5 L3 3 L5.5 0.5" fill="none" stroke="#b8b8b8" stroke-width="0.9"/></svg>
<div class="a" style="left:376.9px;top:441.1px;width:9.1px;height:9.6px;background:#1f1f1f;"></div>
<svg style="left:390px;top:441.3px;" width="10" height="10" viewBox="0 0 10 10"><path d="M5 5.2 C5.2 4 3.6 3.8 3.4 5 C3.2 6.5 5.5 7.2 6.6 5.8 C7.9 4.2 6.8 1.8 4.6 1.8 C2.2 1.8 1 3.8 1.2 5.6 C1.5 8 3.5 9 5.5 8.8 C7.5 8.6 8.8 7.3 9.2 5.8" fill="none" stroke="#b8b8b8" stroke-width="0.9"/></svg>
<div class="a" style="left:401.7px;top:441.1px;width:32.4px;height:9.6px;background:#1b1b1b;"></div>
<div class="a" style="left:405px;top:440.3px;width:18px;height:11px;overflow:hidden">
<div class="t" style="left:1px;top:2.53px;font-size:8px;color:#cccccc;transform:scaleY(1.12);transform-origin:0 6.77px;-webkit-text-stroke:0.2px #cccccc;">No M</div>
</div>
<svg style="left:426.5px;top:444.3px;" width="6" height="4" viewBox="0 0 6 4"><path d="M0.5 0.5 L3 3 L5.5 0.5" fill="none" stroke="#b8b8b8" stroke-width="0.9"/></svg>
<svg style="left:462.5px;top:441.3px;" width="10" height="10" viewBox="0 0 10 10"><path d="M5 5.2 C5.2 4 3.6 3.8 3.4 5 C3.2 6.5 5.5 7.2 6.6 5.8 C7.9 4.2 6.8 1.8 4.6 1.8 C2.2 1.8 1 3.8 1.2 5.6 C1.5 8 3.5 9 5.5 8.8 C7.5 8.6 8.8 7.3 9.2 5.8" fill="none" stroke="#b8b8b8" stroke-width="0.9"/></svg>
<div class="a" style="left:476.9px;top:441.1px;width:64.9px;height:9.6px;background:#1b1b1b;"></div>
<div class="t" style="left:481px;top:442.83px;font-size:8px;color:#cccccc;transform:scaleY(1.12);transform-origin:0 6.77px;-webkit-text-stroke:0.2px #cccccc;">None</div>
<svg style="left:533px;top:444.3px;" width="6" height="4" viewBox="0 0 6 4"><path d="M0.5 0.5 L3 3 L5.5 0.5" fill="none" stroke="#b8b8b8" stroke-width="0.9"/></svg>
<div class="a" style="left:1px;top:453px;width:555px;height:11.5px;background:#2a2a2a;"></div>
<div class="a" style="left:4.5px;top:453.8px;width:9.5px;height:9.6px;background:#1c1c1c;"></div>
<svg style="left:4.8px;top:455.5px;" width="9" height="7" viewBox="0 0 9 7"><path d="M0.3 3 C2 0 7 0 8.7 3 C7 6 2 6 0.3 3 Z" fill="#c4c4c4"/><circle cx="4.5" cy="3" r="1.6" fill="#1c1c1c"/></svg>
<div class="a" style="left:26.7px;top:453.8px;width:9.3px;height:9.6px;background:#1f1f1f;"></div>
<div class="a" style="left:37.8px;top:453.8px;width:9.2px;height:9.6px;background:#1f1f1f;"></div>
<svg style="left:55.5px;top:456px;" width="4" height="6" viewBox="0 0 4 6"><path d="M0.5 0.5 L3 3 L0.5 5.5" fill="none" stroke="#a8a8a8" stroke-width="0.9"/></svg>
<div class="a" style="left:64px;top:454.5px;width:9px;height:8.5px;background:#6b80e6;"></div>
<div class="t" style="left:80px;top:455.53px;font-size:8px;color:#b8b8b8;transform:scaleY(1.12);transform-origin:0 6.77px;-webkit-text-stroke:0.2px #b8b8b8;">2</div>
<svg style="left:101px;top:454px;" width="10" height="9" viewBox="0 0 10 9"><path d="M5 0.2 L6.3 3.3 L9.7 3.5 L7.1 5.7 L7.9 9 L5 7.2 L2.1 9 L2.9 5.7 L0.3 3.5 L3.7 3.3 Z" fill="#c4c4c4"/></svg>
<div class="t" style="left:114.8px;top:455.53px;font-size:8px;color:#c4c4c4;transform:scaleY(1.12);transform-origin:0 6.77px;-webkit-text-stroke:0.25px #c4c4c4;letter-spacing:0.15px">Triangle</div>
<div class="a" style="left:239.4px;top:453.8px;width:9.9px;height:9.6px;background:#1f1f1f;"></div>
<svg style="left:240px;top:454.5px;" width="10" height="9" viewBox="0 0 10 9"><path d="M1 5 A4 4 0 0 1 9 5 Z" fill="#c8c8c8"/><circle cx="3.6" cy="3.6" r="0.9" fill="#232323"/><circle cx="6.4" cy="3.6" r="0.9" fill="#232323"/><path d="M0 6.5 H10 M5 5 V8.5 M2.5 8.5 H7.5" stroke="#c8c8c8" stroke-width="1"/></svg>
<div class="a" style="left:250.9px;top:453.8px;width:9px;height:9.6px;background:#1f1f1f;"></div>
<svg style="left:251.4px;top:454.5px;" width="9" height="9" viewBox="0 0 9 9"><circle cx="4.5" cy="4.5" r="1.8" fill="none" stroke="#8a8a8a"/><path d="M4.5 0 V2 M4.5 7 V9 M0 4.5 H2 M7 4.5 H9 M1.3 1.3 L2.7 2.7 M6.3 6.3 L7.7 7.7 M1.3 7.7 L2.7 6.3 M6.3 2.7 L7.7 1.3" stroke="#8a8a8a" stroke-width="0.8"/></svg>
<div class="a" style="left:261.7px;top:453.8px;width:9.3px;height:9.6px;background:#1f1f1f;"></div>
<svg style="left:262.5px;top:454.5px;" width="8" height="8" viewBox="0 0 8 8"><path d="M0.8 7.5 L7.5 0.8" stroke="#c4c4c4" stroke-width="1.1"/></svg>
<div class="a" style="left:295px;top:453.8px;width:9.4px;height:9.6px;background:#1f1f1f;"></div>
<div class="a" style="left:306.2px;top:453.8px;width:9.4px;height:9.6px;background:#1f1f1f;"></div>
<div class="a" style="left:317px;top:453.8px;width:9.4px;height:9.6px;background:#1f1f1f;"></div>
<div class="a" style="left:340px;top:453.8px;width:32.2px;height:9.6px;background:#1b1b1b;"></div>
<div class="t" style="left:344px;top:455.53px;font-size:8px;color:#cccccc;transform:scaleY(1.12);transform-origin:0 6.77px;-webkit-text-stroke:0.2px #cccccc;">Norn</div>
<svg style="left:364px;top:457px;" width="6" height="4" viewBox="0 0 6 4"><path d="M0.5 0.5 L3 3 L5.5 0.5" fill="none" stroke="#b8b8b8" stroke-width="0.9"/></svg>
<div class="a" style="left:376.9px;top:453.8px;width:9.1px;height:9.6px;background:#1f1f1f;"></div>
<svg style="left:390px;top:454px;" width="10" height="10" viewBox="0 0 10 10"><path d="M5 5.2 C5.2 4 3.6 3.8 3.4 5 C3.2 6.5 5.5 7.2 6.6 5.8 C7.9 4.2 6.8 1.8 4.6 1.8 C2.2 1.8 1 3.8 1.2 5.6 C1.5 8 3.5 9 5.5 8.8 C7.5 8.6 8.8 7.3 9.2 5.8" fill="none" stroke="#b8b8b8" stroke-width="0.9"/></svg>
<div class="a" style="left:401.7px;top:453.8px;width:32.4px;height:9.6px;background:#1b1b1b;"></div>
<div class="a" style="left:405px;top:453px;width:18px;height:11px;overflow:hidden">
<div class="t" style="left:1px;top:2.53px;font-size:8px;color:#cccccc;transform:scaleY(1.12);transform-origin:0 6.77px;-webkit-text-stroke:0.2px #cccccc;">No M</div>
</div>
<svg style="left:426.5px;top:457px;" width="6" height="4" viewBox="0 0 6 4"><path d="M0.5 0.5 L3 3 L5.5 0.5" fill="none" stroke="#b8b8b8" stroke-width="0.9"/></svg>
<svg style="left:462.5px;top:454px;" width="10" height="10" viewBox="0 0 10 10"><path d="M5 5.2 C5.2 4 3.6 3.8 3.4 5 C3.2 6.5 5.5 7.2 6.6 5.8 C7.9 4.2 6.8 1.8 4.6 1.8 C2.2 1.8 1 3.8 1.2 5.6 C1.5 8 3.5 9 5.5 8.8 C7.5 8.6 8.8 7.3 9.2 5.8" fill="none" stroke="#b8b8b8" stroke-width="0.9"/></svg>
<div class="a" style="left:476.9px;top:453.8px;width:64.9px;height:9.6px;background:#1b1b1b;"></div>
<div class="t" style="left:481px;top:455.53px;font-size:8px;color:#cccccc;transform:scaleY(1.12);transform-origin:0 6.77px;-webkit-text-stroke:0.2px #cccccc;">None</div>
<svg style="left:533px;top:457px;" width="6" height="4" viewBox="0 0 6 4"><path d="M0.5 0.5 L3 3 L5.5 0.5" fill="none" stroke="#b8b8b8" stroke-width="0.9"/></svg>
<div class="a" style="left:554.5px;top:425px;width:2.5px;height:190px;background:#171717;"></div>
<div class="a" style="left:557px;top:379px;width:467px;height:236px;background:#252525;"></div>
<div class="a" style="left:557px;top:403px;width:451px;height:1px;background:#111;"></div>
<div class="a" style="left:564px;top:404px;width:441px;height:6px;background:#6a6a6a;"></div>
<svg style="left:557px;top:404px;" width="7" height="6" viewBox="0 0 7 6"><path d="M5 0 H3 A3 3 0 0 0 3 6 H5 Z" fill="#2e8ae6"/><rect x="5" y="0" width="2" height="6" fill="#4a7fc0"/></svg>
<svg style="left:1005px;top:404px;" width="4" height="6" viewBox="0 0 4 6"><path d="M0 0 A3.5 3 0 0 1 0 6 Z" fill="#2e8ae6"/></svg>
<div class="t" style="left:620.5px;top:413.57px;font-size:7px;color:#a8a8a8;transform:scaleY(1.12);transform-origin:0 5.93px;-webkit-text-stroke:0.1px #a8a8a8;">00:15s</div>
<div class="a" style="left:631.0px;top:422px;width:1px;height:2.5px;background:#888;"></div>
<div class="t" style="left:689.5px;top:413.57px;font-size:7px;color:#a8a8a8;transform:scaleY(1.12);transform-origin:0 5.93px;-webkit-text-stroke:0.1px #a8a8a8;">00:30s</div>
<div class="a" style="left:700.0px;top:422px;width:1px;height:2.5px;background:#888;"></div>
<div class="t" style="left:758.5px;top:413.57px;font-size:7px;color:#a8a8a8;transform:scaleY(1.12);transform-origin:0 5.93px;-webkit-text-stroke:0.1px #a8a8a8;">00:45s</div>
<div class="a" style="left:769.0px;top:422px;width:1px;height:2.5px;background:#888;"></div>
<div class="t" style="left:827.5px;top:413.57px;font-size:7px;color:#a8a8a8;transform:scaleY(1.12);transform-origin:0 5.93px;-webkit-text-stroke:0.1px #a8a8a8;">01:00s</div>
<div class="a" style="left:838.0px;top:420.5px;width:1px;height:4px;background:#888;"></div>
<div class="t" style="left:896.5px;top:413.57px;font-size:7px;color:#a8a8a8;transform:scaleY(1.12);transform-origin:0 5.93px;-webkit-text-stroke:0.1px #a8a8a8;">01:15s</div>
<div class="a" style="left:907.0px;top:422px;width:1px;height:2.5px;background:#888;"></div>
<div class="t" style="left:965.5px;top:413.57px;font-size:7px;color:#a8a8a8;transform:scaleY(1.12);transform-origin:0 5.93px;-webkit-text-stroke:0.1px #a8a8a8;">01:30s</div>
<div class="a" style="left:976.0px;top:422px;width:1px;height:2.5px;background:#888;"></div>
<div class="t" style="left:557.5px;top:413.57px;font-size:7px;color:#a8a8a8;transform:scaleY(1.12);transform-origin:0 5.93px;-webkit-text-stroke:0.1px #a8a8a8;">0:00s</div>
<div class="a" style="left:557px;top:425px;width:451px;height:1px;background:#1a1a1a;"></div>
<div class="a" style="left:562px;top:426px;width:443px;height:10.5px;background:#6a6a6a;"></div>
<svg style="left:558px;top:426px;" width="4" height="10.5" viewBox="0 0 4 10.5"><path d="M4 0 H3 A3 3 0 0 0 0 3 V7.5 A3 3 0 0 0 3 10.5 H4 Z" fill="#2e8ae6"/></svg>
<svg style="left:1005px;top:426px;" width="4" height="10.5" viewBox="0 0 4 10.5"><path d="M0 0 H1 A3 3 0 0 1 4 3 V7.5 A3 3 0 0 1 1 10.5 H0 Z" fill="#2e8ae6"/></svg>
<div class="a" style="left:557px;top:436.5px;width:453px;height:3.5px;background:#232323;"></div>
<div class="a" style="left:562px;top:437px;width:443px;height:2px;background:#12c01a;"></div>
<div class="a" style="left:557px;top:440px;width:448px;height:175px;background:#333333;"></div>
<div class="a" style="left:562px;top:440px;width:443px;height:11.5px;background:#535e9a;"></div>
<div class="a" style="left:562px;top:452.5px;width:443px;height:11px;background:#535e9a;"></div>
<div class="a" style="left:562px;top:451.5px;width:443px;height:1px;background:#3a3f5c;"></div>
<div class="a" style="left:1005px;top:440px;width:5px;height:175px;background:#2a2a2a;"></div>
<div class="a" style="left:1010px;top:379px;width:14px;height:236px;background:#222;"></div>
<svg style="left:1012px;top:426px;" width="9" height="11" viewBox="0 0 9 11"><path d="M0.5 0.5 H8.5 V7 L4.5 10.5 L0.5 7 Z" fill="#b8b8b8"/></svg>
<svg style="left:1011px;top:447px;" width="11" height="9" viewBox="0 0 11 9"><path d="M5 0.5 L1 5 L3 8 M7 2 H10.5 V6 H7 Z" fill="#b8b8b8" stroke="#b8b8b8" stroke-width="0.8"/><circle cx="4.5" cy="6" r="1.8" fill="none" stroke="#b8b8b8"/></svg>
<div class="a" style="left:562px;top:419px;width:1px;height:196px;background:#3a8ee0;"></div>
<svg style="left:557px;top:414.5px;" width="11" height="10" viewBox="0 0 11 10"><path d="M0.3 0.3 H10.3 V4.3 L5.3 9.3 L0.3 4.3 Z" fill="#2e8ae6"/></svg>
<div class="a" style="left:0px;top:615px;width:1024px;height:14px;background:#222222;"></div>
<div class="a" style="left:0px;top:614.5px;width:636px;height:1.5px;background:#141414;"></div>
<div class="a" style="left:636px;top:615px;width:388px;height:14px;background:#1e1e1e;"></div>
<div class="a" style="left:4px;top:616px;width:12px;height:12px;background:#1e1e1e;"></div>
<div class="a" style="left:18px;top:616px;width:12px;height:12px;background:#1e1e1e;"></div>
<svg style="left:6px;top:617px;" width="10" height="10" viewBox="0 0 10 10"><rect x="0.5" y="0.5" width="6.5" height="6" rx="1" fill="#1d3f66" stroke="#2e86e0"/><rect x="2.5" y="2.5" width="6.5" height="6.5" rx="1" fill="#1d3f66" stroke="#2e86e0"/><path d="M4.5 6 H7.5" stroke="#9cc8f0" stroke-width="0.8"/></svg>
<svg style="left:20px;top:617px;" width="10" height="10" viewBox="0 0 10 10"><path d="M3.5 0.5 L6 1.8 V4.6 L3.5 6 L1 4.6 V1.8 Z" fill="#1d3f66" stroke="#2e86e0"/><path d="M6 3.5 L8.8 5 V8 L6 9.4 L3.3 8 V5 Z" fill="#2a6ab8" stroke="#2e86e0"/></svg>
<svg style="left:34px;top:617px;" width="10" height="10" viewBox="0 0 10 10"><path d="M2.8 0.5 C1.3 0.5 1.8 4.5 0.6 5 C1.8 5.5 1.3 9.5 2.8 9.5 M7.2 0.5 C8.7 0.5 8.2 4.5 9.4 5 C8.2 5.5 8.7 9.5 7.2 9.5" fill="none" stroke="#b8b8b8" stroke-width="0.9"/><path d="M5 1 V9" stroke="#b8b8b8" stroke-width="0.8"/></svg>
<svg style="left:48px;top:618px;" width="11" height="9" viewBox="0 0 11 9"><circle cx="4" cy="3.5" r="3" fill="#b8b8b8"/><path d="M0.5 8.5 C0.5 6 7.5 6 7.5 8.5 Z" fill="#b8b8b8"/><path d="M8.3 1.5 H10 M8.3 3 H9.5" stroke="#8a8a8a" stroke-width="0.8"/></svg>
<div class="t" style="left:78px;top:619.73px;font-size:8px;color:#a8a8a8;transform:scaleY(1.12);transform-origin:0 6.77px;-webkit-text-stroke:0.05px #a8a8a8;">Frame Render Time</div>
<div class="t" style="left:152px;top:619.73px;font-size:8px;color:#4ccfa0;transform:scaleY(1.12);transform-origin:0 6.77px;font-weight:bold">3ms</div>
<svg style="left:561px;top:619px;" width="8" height="4.5" viewBox="0 0 8 4.5"><path d="M0 4 L2 2 L3 3 L5 0.5 L7.5 4 Z" fill="#c0c0c0"/></svg>
<svg style="left:576px;top:618px;" width="8" height="8" viewBox="0 0 8 8"><circle cx="4" cy="4" r="3.1" fill="none" stroke="#b0b0b0" stroke-width="1.2"/></svg>
<div class="a" style="left:584px;top:621px;width:28px;height:1px;background:#4a4a4a;"></div>
<svg style="left:620px;top:618.5px;" width="13" height="6" viewBox="0 0 13 6"><path d="M0 5.5 L3 1.5 L4.5 3.5 L7 0.3 L12.5 5.5 Z" fill="#c0c0c0"/><path d="M4 5.5 L5.5 3.8" stroke="#1e1e1e" stroke-width="0.8"/></svg>
<div class="a" style="left:212px;top:18px;width:145px;height:62px;background:#262626;box-shadow:0 1px 2px #000"></div>
<div class="a" style="left:211px;top:0px;width:147px;height:18px;background:#00e600;"></div>
<div class="a" style="left:213.4px;top:2px;width:142.2px;height:13px;background:#000;"></div>
<div class="a" style="left:218px;top:7px;width:4px;height:4px;background:#d8d8d8;"></div>
<div class="a" style="left:229px;top:3px;width:12px;height:11px;background:#4a4a4a;border:1px solid #8a8a8a;border-radius:1px"></div>
<div class="t" style="left:245.8px;top:6.23px;font-size:8px;color:#c8c8c8;transform:scaleY(1.12);transform-origin:0 6.77px;-webkit-text-stroke:0.05px #c8c8c8;">Rectangle Tool</div>
<div class="t" style="left:346px;top:6.23px;font-size:8px;color:#c8c8c8;transform:scaleY(1.12);transform-origin:0 6.77px;-webkit-text-stroke:0.05px #c8c8c8;">Q</div>
<div class="a" style="left:229px;top:19px;width:12px;height:11px;background:#4a4a4a;border:1px solid #8a8a8a;border-radius:2.5px"></div>
<div class="t" style="left:245.8px;top:21.73px;font-size:8px;color:#a8a8a8;transform:scaleY(1.12);transform-origin:0 6.77px;-webkit-text-stroke:0.05px #a8a8a8;">Rounded Rectangle Tool</div>
<div class="t" style="left:346px;top:21.73px;font-size:8px;color:#a8a8a8;transform:scaleY(1.12);transform-origin:0 6.77px;-webkit-text-stroke:0.05px #a8a8a8;">Q</div>
<svg style="left:228px;top:35px;" width="14" height="11" viewBox="0 0 14 11"><ellipse cx="7" cy="5.5" rx="6.3" ry="4.7" fill="#4a4a4a" stroke="#8a8a8a" stroke-width="1"/></svg>
<div class="t" style="left:245.8px;top:37.73px;font-size:8px;color:#a8a8a8;transform:scaleY(1.12);transform-origin:0 6.77px;-webkit-text-stroke:0.05px #a8a8a8;">Ellipse Tool</div>
<div class="t" style="left:346px;top:37.73px;font-size:8px;color:#a8a8a8;transform:scaleY(1.12);transform-origin:0 6.77px;-webkit-text-stroke:0.05px #a8a8a8;">Q</div>
<svg style="left:228px;top:51px;" width="14" height="12" viewBox="0 0 14 12"><path d="M3.5 0.8 H10.5 L13.3 6 L10.5 11.2 H3.5 L0.7 6 Z" fill="#4a4a4a" stroke="#8a8a8a" stroke-width="1"/></svg>
<div class="t" style="left:245.8px;top:53.73px;font-size:8px;color:#a8a8a8;transform:scaleY(1.12);transform-origin:0 6.77px;-webkit-text-stroke:0.05px #a8a8a8;">Polygon Tool</div>
<div class="t" style="left:346px;top:53.73px;font-size:8px;color:#a8a8a8;transform:scaleY(1.12);transform-origin:0 6.77px;-webkit-text-stroke:0.05px #a8a8a8;">Q</div>
<svg style="left:228px;top:66px;" width="14" height="13" viewBox="0 0 14 13"><path d="M7 0.8 L8.8 4.6 L12.9 5 L9.8 7.7 L10.7 11.8 L7 9.7 L3.3 11.8 L4.2 7.7 L1.1 5 L5.2 4.6 Z" fill="#4a4a4a" stroke="#8a8a8a" stroke-width="1"/></svg>
<div class="t" style="left:245.8px;top:69.73px;font-size:8px;color:#a8a8a8;transform:scaleY(1.12);transform-origin:0 6.77px;-webkit-text-stroke:0.05px #a8a8a8;">Star Tool</div>
<div class="t" style="left:346px;top:69.73px;font-size:8px;color:#a8a8a8;transform:scaleY(1.12);transform-origin:0 6.77px;-webkit-text-stroke:0.05px #a8a8a8;">Q</div>
</body></html>
